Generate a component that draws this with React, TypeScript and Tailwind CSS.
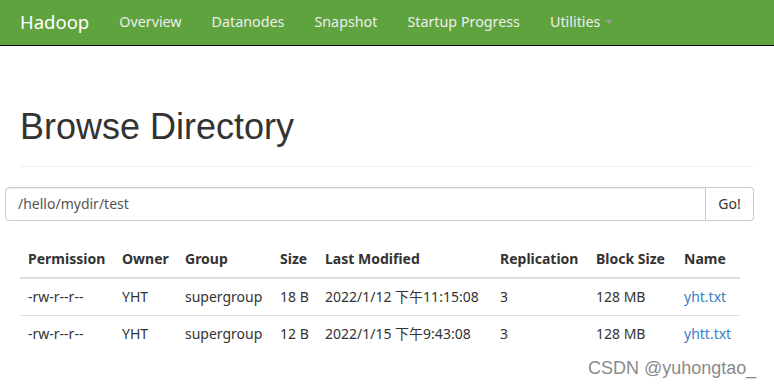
import React from 'react';

const rows = [
  { perm: '-rw-r--r--', owner: 'YHT', group: 'supergroup', size: '18 B', modified: '2022/1/12 下午11:15:08', repl: '3', block: '128 MB', name: 'yht.txt' },
  { perm: '-rw-r--r--', owner: 'YHT', group: 'supergroup', size: '12 B', modified: '2022/1/15 下午9:43:08', repl: '3', block: '128 MB', name: 'yhtt.txt' },
];

const cols = [
  { label: 'Permission', w: 'w-[94px]' },
  { label: 'Owner', w: 'w-[63px]' },
  { label: 'Group', w: 'w-[95px]' },
  { label: 'Size', w: 'w-[45px]' },
  { label: 'Last Modified', w: 'w-[175px]' },
  { label: 'Replication', w: 'w-[96px]' },
  { label: 'Block Size', w: 'w-[88px]' },
  { label: 'Name', w: 'w-[64px]' },
];

export default function App() {
  return (
    <div className="relative w-[774px] h-[387px] overflow-hidden bg-white text-[14px] text-[#333] font-['Noto_Sans','Noto_Sans_CJK_SC',sans-serif]">
      <nav className="h-[46px] bg-[#5fa33e] border-b border-black flex items-center px-[20px] pb-[2px]">
        <span className="text-white text-[18.5px] pr-[15px]">Hadoop</span>
        {['Overview', 'Datanodes', 'Snapshot', 'Startup Progress'].map(item => (
          <span key={item} className="px-[15px] text-[14.3px] text-[#eee]">{item}</span>
        ))}
        <span className="px-[15px] text-[14.3px] text-[#eee] flex items-center">
          Utilities
          <span className="ml-[5px] w-0 h-0 border-x-[4px] border-x-transparent border-t-[4px] border-t-[#999]" />
        </span>
      </nav>

      <div className="mx-[20px] mt-[61px] mb-[20px] pb-[9px] border-b border-[#eee]">
        <h1 className="mb-[10px] text-[36px] leading-[1.1] font-['Liberation_Sans',Arial,sans-serif] text-[#333]">
          Browse Directory
        </h1>
      </div>

      <div className="ml-[5px] w-[749px] flex h-[34px]">
        <div className="flex-1 border border-[#ccc] rounded-l-[4px] flex items-center px-[12px] text-[#555] shadow-[inset_0_1px_1px_rgba(0,0,0,0.075)]">
          /hello/mydir/test
        </div>
        <button className="w-[48px] border border-l-0 border-[#ccc] rounded-r-[4px] text-[#333] bg-white">Go!</button>
      </div>

      <table className="ml-[20px] mt-[20px] w-[720px] border-collapse table-fixed">
        <thead>
          <tr className="border-b-2 border-[#ddd]">
            {cols.map(c => (
              <th key={c.label} className={`${c.w} text-left font-bold px-[8px] py-[8px] leading-[20px] whitespace-nowrap`}>{c.label}</th>
            ))}
          </tr>
        </thead>
        <tbody>
          {rows.map((r, i) => (
            <tr key={r.name} className={i === 0 ? 'border-b border-[#ddd]' : ''}>
              <td className="px-[8px] py-[8px] leading-[20px] whitespace-nowrap">{r.perm}</td>
              <td className="px-[8px] py-[8px] leading-[20px] whitespace-nowrap">{r.owner}</td>
              <td className="px-[8px] py-[8px] leading-[20px] whitespace-nowrap">{r.group}</td>
              <td className="px-[8px] py-[8px] leading-[20px] whitespace-nowrap">{r.size}</td>
              <td className="px-[8px] py-[8px] leading-[20px] whitespace-nowrap">{r.modified}</td>
              <td className="px-[8px] py-[8px] leading-[20px] whitespace-nowrap">{r.repl}</td>
              <td className="px-[8px] py-[8px] leading-[20px] whitespace-nowrap">{r.block}</td>
              <td className="px-[8px] py-[8px] leading-[20px] whitespace-nowrap text-[#3a80c8]">{r.name}</td>
            </tr>
          ))}
        </tbody>
      </table>

      <div className="absolute left-[588px] top-[355px] text-[18px] text-[#8a8a8a] font-['Liberation_Sans',Arial,sans-serif]">
        CSDN @yuhongtao_
      </div>
    </div>
  );
}
